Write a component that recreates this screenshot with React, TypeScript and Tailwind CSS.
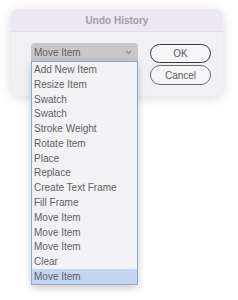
import { useState } from 'react'

const items = [
  'Add New Item',
  'Resize Item',
  'Swatch',
  'Swatch',
  'Stroke Weight',
  'Rotate Item',
  'Place',
  'Replace',
  'Create Text Frame',
  'Fill Frame',
  'Move Item',
  'Move Item',
  'Move Item',
  'Clear',
  'Move Item',
]

export default function App() {
  const [selected, setSelected] = useState(items.length - 1)

  return (
    <div className="relative h-[300px] w-[238px] overflow-hidden bg-white font-['Liberation_Sans',Arial,sans-serif] text-[10px]">
      <div className="pl-[11px] pt-[9px]">
        <div className="w-[212px] overflow-hidden rounded-[8px] bg-[#f1f0f2] shadow-[0_2px_12px_rgba(0,0,0,0.15)]">
          <div className="flex h-[23px] items-center justify-center border-b border-[#e4dfe6] bg-[#ede7ef] font-bold text-[#a29ca6]">
            Undo History
          </div>
          <div className="flex h-[64px] items-start pl-[20px] pt-[11px]">
            <div className="flex h-[18px] w-[107px] items-center justify-between rounded-t-[4px] bg-[#c9c7ca] pl-[3px] pr-[6px] text-[#616063]">
              <span>Move Item</span>
              <svg width="7" height="5" viewBox="0 0 7 5" className="mt-[1px]">
                <path d="M1 1l2.5 2.5L6 1" fill="none" stroke="#8d8a90" strokeWidth="1.2" />
              </svg>
            </div>
            <div className="ml-[12px] flex flex-col gap-[2px] pt-[1px]">
              <button className="flex h-[19px] w-[61px] items-center justify-center rounded-full border-[1.5px] border-[#3a3a3c] bg-[#f6f5f7] text-[10px] text-[#5a5a5a]">
                OK
              </button>
              <button className="flex h-[20px] w-[61px] items-center justify-center rounded-full border border-[#6e6d70] bg-[#f6f5f7] text-[10px] text-[#5a5a5a]">
                Cancel
              </button>
            </div>
          </div>
        </div>
      </div>

      <ul className="absolute left-[31px] top-[61px] w-[107px] border border-[#8ea6d4] bg-[#f2f2f4] shadow-[0_3px_8px_rgba(0,0,0,0.2)]">
        {items.map((label, i) => (
          <li
            key={i}
            onClick={() => setSelected(i)}
            className={
              'flex h-[14.8px] items-center pl-[2px] text-[#616063] ' +
              (i === selected ? 'bg-[#c3d5f0]' : '')
            }
          >
            {label}
          </li>
        ))}
      </ul>
    </div>
  )
}
